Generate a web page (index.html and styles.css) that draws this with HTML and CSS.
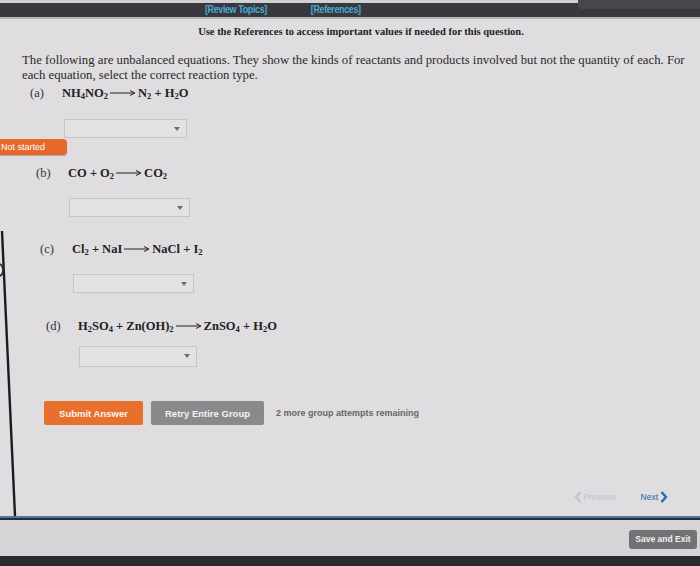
FILE: index.html
```html
<!DOCTYPE html>
<html>
<head>
<meta charset="utf-8">
<link rel="stylesheet" href="styles.css">
</head>
<body>
<div class="screen">
  <div class="topstrip"></div>
  <div class="navbar">
    <span class="navlink">[Review Topics]</span>
    <span class="navlink">[References]</span>
  </div>
  <div class="corner-panel"></div>
  <div class="subbar"></div>
  <main class="content">
    <p class="note">Use the References to access important values if needed for this question.</p>
    <p class="intro">The following are unbalanced equations. They show the kinds of reactants and products involved but not the quantity of each. For each equation, select the correct reaction type.</p>

    <div class="item item-a">
      <div class="eq"><span class="lbl">(a)</span><b>NH<sub>4</sub>NO<sub>2</sub></b><span class="arrow"><svg width="26" height="8" viewBox="0 0 26 8"><line x1="0" y1="4" x2="24" y2="4" stroke="#222" stroke-width="1"/><path d="M20 1.5 L25 4 L20 6.5" fill="none" stroke="#222" stroke-width="1"/></svg></span><b>N<sub>2</sub> + H<sub>2</sub>O</b></div>
      <div class="select"><span class="caret"></span></div>
    </div>
    <div class="status">Not started</div>

    <div class="item item-b">
      <div class="eq"><span class="lbl">(b)</span><b>CO + O<sub>2</sub></b><span class="arrow"><svg width="26" height="8" viewBox="0 0 26 8"><line x1="0" y1="4" x2="24" y2="4" stroke="#222" stroke-width="1"/><path d="M20 1.5 L25 4 L20 6.5" fill="none" stroke="#222" stroke-width="1"/></svg></span><b>CO<sub>2</sub></b></div>
      <div class="select"><span class="caret"></span></div>
    </div>

    <div class="item item-c">
      <div class="eq"><span class="lbl">(c)</span><b>Cl<sub>2</sub> + NaI</b><span class="arrow"><svg width="26" height="8" viewBox="0 0 26 8"><line x1="0" y1="4" x2="24" y2="4" stroke="#222" stroke-width="1"/><path d="M20 1.5 L25 4 L20 6.5" fill="none" stroke="#222" stroke-width="1"/></svg></span><b>NaCl + I<sub>2</sub></b></div>
      <div class="select"><span class="caret"></span></div>
    </div>

    <div class="item item-d">
      <div class="eq"><span class="lbl">(d)</span><b>H<sub>2</sub>SO<sub>4</sub> + Zn(OH)<sub>2</sub></b><span class="arrow"><svg width="26" height="8" viewBox="0 0 26 8"><line x1="0" y1="4" x2="24" y2="4" stroke="#222" stroke-width="1"/><path d="M20 1.5 L25 4 L20 6.5" fill="none" stroke="#222" stroke-width="1"/></svg></span><b>ZnSO<sub>4</sub> + H<sub>2</sub>O</b></div>
      <div class="select"><span class="caret"></span></div>
    </div>

    <div class="actions">
      <button class="btn btn-submit">Submit Answer</button>
      <button class="btn btn-retry">Retry Entire Group</button>
      <span class="attempts">2 more group attempts remaining</span>
    </div>

    <div class="pager">
      <span class="prev"><svg width="8" height="12" viewBox="0 0 8 12"><path d="M6.5 1 L2 6 L6.5 11" fill="none" stroke="#b8c6d6" stroke-width="2.4"/></svg>Previous</span>
      <span class="next">Next<svg width="8" height="12" viewBox="0 0 8 12"><path d="M1.5 1 L6 6 L1.5 11" fill="none" stroke="#2a6aae" stroke-width="2.4"/></svg></span>
    </div>
    <svg class="edge-line" width="20" height="290" viewBox="0 0 20 290"><line x1="2" y1="0" x2="15" y2="285" stroke="#1c1c20" stroke-width="2.4"/></svg>
    <div class="knob"></div>
  </main>
  <div class="rule-blue"></div>
  <div class="rule-dark"></div>
  <footer class="footer">
    <button class="btn-save">Save and Exit</button>
  </footer>
  <div class="bottombar"></div>
</div>
</body>
</html>
```

FILE: styles.css
```css
* { box-sizing: border-box; }
html, body { margin: 0; padding: 0; }
body {
  width: 700px;
  height: 566px;
  overflow: hidden;
  background: #dcdadc;
  font-family: "Liberation Serif", "Times New Roman", serif;
  color: #222;
}
.screen {
  position: relative;
  width: 700px;
  height: 566px;
  display: flex;
  flex-direction: column;
}
.topstrip { height: 3px; background: #d2d0d3; }
.navbar {
  height: 14px;
  background: #38383e;
  display: flex;
  align-items: center;
  gap: 44px;
  padding-left: 205px;
}
.navlink {
  font-family: "Liberation Sans", Arial, sans-serif;
  font-weight: bold;
  font-size: 9px;
  color: #48acd2;
  letter-spacing: -0.4px;
  transform: scaleY(1.15);
}
.corner-panel {
  position: absolute;
  top: 0;
  left: 578px;
  width: 122px;
  height: 9px;
  background: #46464c;
  border-bottom-left-radius: 4px;
}
.subbar { height: 2px; background: #b9b7ba; }
.content {
  position: relative;
  flex: 1;
  display: flex;
  flex-direction: column;
  background: #dfdde0;
}
.note {
  margin: 6px 0 0 0;
  text-align: center;
  padding-left: 22px;
  font-weight: bold;
  font-size: 10.5px;
  line-height: 14px;
  color: #222;
}
.intro {
  margin: 14px 0 0 22px;
  width: 665px;
  font-size: 12.75px;
  line-height: 15px;
  color: #2a2a2a;
}
.item { display: flex; flex-direction: column; }
.eq {
  display: flex;
  align-items: center;
  font-size: 12.5px;
  height: 14px;
  color: #222;
}
.eq b { font-weight: bold; }
.eq sub { font-size: 8.5px; vertical-align: -2px; line-height: 0; }
.lbl { width: 32px; font-size: 12.5px; color: #333; }
.arrow { display: inline-flex; margin: 0 2px 0 2px; }
.select {
  position: relative;
  width: 123px;
  height: 19px;
  border: 1px solid #c6c4c7;
  background: #e3e1e4;
}
.caret {
  position: absolute;
  right: 6px;
  top: 7px;
  width: 0;
  height: 0;
  border-left: 3.5px solid transparent;
  border-right: 3.5px solid transparent;
  border-top: 4px solid #6e6e72;
}
.item-a { margin: 3px 0 0 30px; }
.item-a .select { margin: 19px 0 0 34px; }
.status {
  width: 67px;
  height: 16px;
  margin-top: 1px;
  background: #e56a2a;
  color: #fff;
  font-family: "Liberation Sans", Arial, sans-serif;
  font-size: 9px;
  line-height: 16px;
  padding-left: 1px;
  border-radius: 0 4px 4px 0;
  box-shadow: 0 1px 1px rgba(0,0,0,0.25);
}
.item-b { margin: 11px 0 0 36px; }
.item-b .select { margin: 18px 0 0 33px; width: 121px; }
.item-c { margin: 25px 0 0 40px; }
.item-c .select { margin: 18px 0 0 33px; width: 121px; }
.item-d { margin: 26px 0 0 46px; }
.item-d .select { margin: 13px 0 0 33px; width: 118px; height: 21px; }
.actions {
  display: flex;
  align-items: center;
  margin: 34px 0 0 44px;
}
.btn {
  height: 24px;
  border: none;
  border-radius: 2px;
  color: #f4f4f4;
  font-family: "Liberation Sans", Arial, sans-serif;
  font-weight: bold;
  font-size: 9.5px;
  padding: 0;
}
.btn-submit { width: 99px; background: #e7712c; }
.btn-retry { width: 113px; margin-left: 8px; background: #8a898c; }
.attempts {
  margin-left: 12px;
  font-family: "Liberation Sans", Arial, sans-serif;
  font-weight: bold;
  font-size: 9px;
  color: #666;
}
.pager {
  margin-top: auto;
  margin-bottom: 13px;
  display: flex;
  align-items: center;
  justify-content: flex-end;
  padding-right: 32px;
  gap: 24px;
  font-family: "Liberation Sans", Arial, sans-serif;
  font-size: 8.5px;
}
.prev { display: flex; align-items: center; gap: 1px; color: #b8c4d2; }
.next { display: flex; align-items: center; gap: 2px; color: #2a65a6; }
.edge-line { position: absolute; left: 0; top: 212px; }
.knob {
  position: absolute;
  left: -6px;
  top: 244px;
  width: 10px;
  height: 14px;
  border: 2px solid #333;
  border-radius: 50%;
  background: #eee;
}
.rule-blue { height: 2px; background: #4b79a6; }
.rule-dark { height: 2px; background: #2b2b31; }
.footer {
  height: 36px;
  background: #d6d4d7;
  display: flex;
  align-items: center;
  justify-content: flex-end;
  padding-right: 3px;
}
.btn-save {
  width: 68px;
  height: 19px;
  border: none;
  border-radius: 3px;
  background: #727174;
  color: #f2f2f2;
  font-family: "Liberation Sans", Arial, sans-serif;
  font-weight: bold;
  font-size: 8.5px;
  padding: 0;
  margin-top: 2px;
}
.bottombar { height: 10px; background: #2a2a2f; }
```
